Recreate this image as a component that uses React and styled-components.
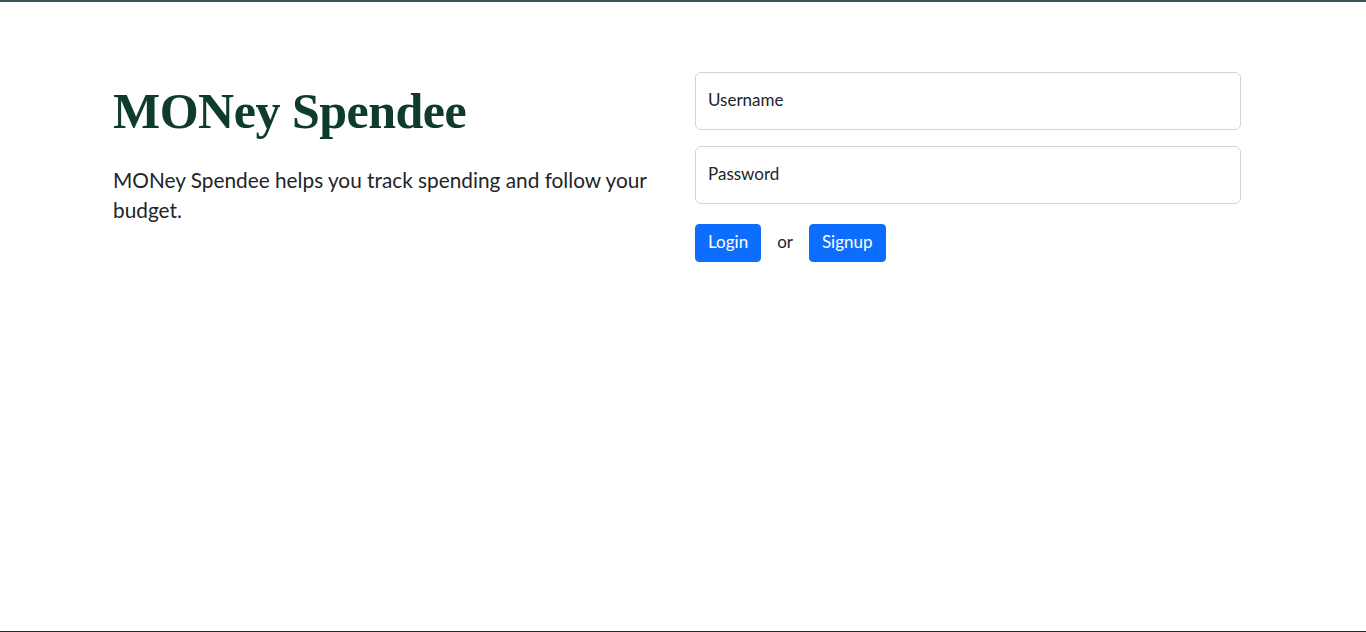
import React from 'react';
import styled, { createGlobalStyle } from 'styled-components';

const GlobalStyle = createGlobalStyle`
  * { box-sizing: border-box; }
  body {
    margin: 0;
    background: #fff;
    color: #212529;
    font-family: Lato, "Open Sans", sans-serif;
  }
`;

const App = () => {
  return (
    <Page>
      <GlobalStyle />
      <Container>
        <Intro>
          <Title>MONey Spendee</Title>
          <Lead>MONey Spendee helps you track spending and follow your budget.</Lead>
        </Intro>
        <LoginForm onSubmit={(e) => e.preventDefault()}>
          <Field type="text" placeholder="Username" />
          <Field type="password" placeholder="Password" />
          <Actions>
            <Button type="submit">Login</Button>
            <Or>or</Or>
            <Button type="button">Signup</Button>
          </Actions>
        </LoginForm>
      </Container>
    </Page>
  );
};

const Page = styled.div`
  height: 632px;
  border-top: 2px solid #3e5058;
  border-bottom: 1px solid #2a2a2a;
`;
const Container = styled.div`
  width: 1140px;
  margin: 0 auto;
  padding: 70px 12px 0 0;
  display: grid;
  grid-template-columns: 570px 1fr;
  align-items: start;
`;
const Intro = styled.div`
  padding: 9px 12px 0 0;
`;
const Title = styled.h1`
  margin: 0 0 24px;
  font-family: "Liberation Serif", serif;
  font-weight: 700;
  font-size: 50px;
  line-height: 60px;
  letter-spacing: -0.5px;
  color: #0e3b2c;
`;
const Lead = styled.p`
  margin: 0;
  font-size: 20.8px;
  line-height: 30px;
  color: #212529;
`;
const LoginForm = styled.form`
  display: flex;
  flex-direction: column;
  gap: 16px;
  padding: 0 0 0 12px;
`;
const Field = styled.input`
  height: 58px;
  padding: 0 0 3px 12px;
  border: 1px solid #ced4da;
  border-radius: 6px;
  font-family: inherit;
  font-size: 17px;
  color: #212529;
  outline: none;
  &::placeholder {
    color: #212529;
  }
`;
const Actions = styled.div`
  display: flex;
  align-items: center;
  gap: 16px;
  margin-top: 4px;
`;
const Button = styled.button`
  height: 38px;
  padding: 0 12px 3px;
  border: 1px solid #0d6efd;
  border-radius: 4px;
  background: #0d6efd;
  color: #fff;
  font-family: inherit;
  font-size: 17px;
  cursor: pointer;
`;
const Or = styled.span`
  font-size: 17px;
  padding-bottom: 3px;
`;

export default App;
